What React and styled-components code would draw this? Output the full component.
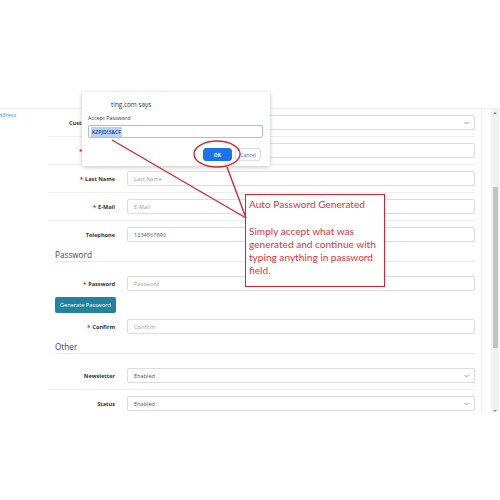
import styled, { createGlobalStyle } from "styled-components";

const Global = createGlobalStyle`
  html, body { margin: 0; padding: 0; background: #fff; }
  * { box-sizing: border-box; }
`;

//whole 500x500 picture
const Screen = styled.div`
  position: relative;
  width: 500px;
  height: 500px;
  overflow: hidden;
  background: #fff;
  font-family: "Open Sans", "Liberation Sans", sans-serif;
  padding-top: 108px;
`;

const Viewport = styled.div`
  display: flex;
  height: 304px;
  border-top: 1px solid #eee;
  overflow: hidden;
`;

const Sidebar = styled.div`
  width: 48px;
  overflow: hidden;
  padding-top: 2px;
`;

const SideLink = styled.div`
  margin-left: -5px;
  font-size: 5.6px;
  color: #3d97d3;
  white-space: nowrap;
`;

const Panel = styled.div`
  width: 434px;
  padding-right: 6px;
  border-right: 1px solid #f2f2f2;
`;

const Row = styled.div`
  display: grid;
  grid-template-columns: 67px 1fr;
  column-gap: 12px;
  align-items: center;
  padding: ${(p) => (p.$top ? `${p.$top}px` : "6px")} 0 6px;
  border-top: ${(p) => (p.$first ? "none" : "1px solid #eee")};
`;

const Label = styled.div`
  text-align: right;
  font-size: 5.6px;
  font-weight: 700;
  color: #333;
  white-space: nowrap;
`;

const Star = styled.span`
  color: #f00;
  margin-right: 2px;
`;

const Field = styled.div`
  position: relative;
  height: 15px;
  border: 1px solid #dcdcdc;
  border-radius: 2px;
  padding-left: 6px;
  display: flex;
  align-items: center;
  font-size: 5.6px;
  color: ${(p) => (p.$filled ? "#555" : "#a0a0a0")};
`;

const Chevron = styled.svg`
  position: absolute;
  right: 5px;
  top: 5px;
`;

const Legend = styled.div`
  margin-left: 7px;
  padding-top: ${(p) => p.$top}px;
  height: ${(p) => p.$top + 13}px;
  font-size: 8.2px;
  line-height: 12px;
  color: #444;
  border-bottom: 1px solid #e8e8e8;
`;

const ButtonRow = styled.div`
  display: flex;
  padding-left: 7px;
`;

const GenButton = styled.div`
  display: flex;
  align-items: center;
  justify-content: center;
  width: 61px;
  height: 16px;
  border-radius: 2px;
  background: #23829f;
  color: #fff;
  font-size: 5.6px;
`;

const Scrollbar = styled.div`
  margin-left: 9px;
  width: 8px;
  background: #f1f1f1;
  display: flex;
  flex-direction: column;
  align-items: center;
  padding-top: 3px;
`;

const Arrow = styled.div`
  width: 0;
  height: 0;
  border-left: 2px solid transparent;
  border-right: 2px solid transparent;
  ${(p) => (p.$down ? "border-top: 2px solid #888;" : "border-bottom: 2px solid #888;")}
`;

const Thumb = styled.div`
  width: 5px;
  height: 161px;
  margin-top: 73px;
  margin-bottom: auto;
  background: #c3c3c3;
`;

//browser prompt lying over the form
const Dialog = styled.div`
  position: absolute;
  left: 82px;
  top: 92px;
  width: 188px;
  height: 74px;
  background: #fff;
  box-shadow: 0 1px 4px rgba(0, 0, 0, 0.25);
  border-radius: 2px;
  padding: 8px 7px 0 6px;
`;

const Origin = styled.div`
  margin-left: 23px;
  font-size: 6.4px;
  color: #333;
`;

const Prompt = styled.div`
  margin-top: 5px;
  font-size: 5.4px;
  color: #333;
`;

const PromptInput = styled.div`
  margin-top: 3px;
  height: 13px;
  border: 1px solid #9ec0f0;
  border-radius: 2px;
  display: flex;
  align-items: center;
  padding-left: 2px;
`;

const Selected = styled.span`
  background: #b8d2f4;
  color: #1f3f7a;
  font-size: 5.2px;
  font-weight: 600;
  padding: 1px 1px;
`;

const Actions = styled.div`
  display: flex;
  justify-content: flex-end;
  gap: 3px;
  margin-top: 10px;
  padding-right: 2px;
`;

const DlgButton = styled.div`
  width: ${(p) => (p.$primary ? 29 : 26)}px;
  height: 13px;
  border-radius: 3px;
  display: flex;
  align-items: center;
  justify-content: center;
  font-size: 5px;
  font-weight: ${(p) => (p.$primary ? 700 : 400)};
  background: ${(p) => (p.$primary ? "#1a73e8" : "#fff")};
  color: ${(p) => (p.$primary ? "#fff" : "#1a73e8")};
  border: 1px solid ${(p) => (p.$primary ? "#1a73e8" : "#dadce0")};
`;

//red annotation note
const Note = styled.div`
  position: absolute;
  left: 245px;
  top: 194px;
  width: 140px;
  height: 93px;
  border: 1.5px solid #d5232d;
  background: #fff;
  padding: 3px 0 0 3px;
  font-family: Lato, "Liberation Sans", sans-serif;
  font-size: 10.1px;
  line-height: 13.3px;
  color: #e3313b;
`;

const NoteGap = styled.div`
  height: 13.3px;
`;

const Marks = styled.svg`
  position: absolute;
  left: 0;
  top: 0;
  pointer-events: none;
`;

function Select({ value }) {
  return (
    <Field $filled>
      {value}
      <Chevron width="5" height="4" viewBox="0 0 5 4">
        <path d="M0.5 1 L2.5 3 L4.5 1" fill="none" stroke="#777" strokeWidth="0.7" />
      </Chevron>
    </Field>
  );
}

function FormRow({ label, required, children, first, top }) {
  return (
    <Row $first={first} $top={top}>
      <Label>
        {required && <Star>*</Star>}
        {label}
      </Label>
      {children}
    </Row>
  );
}

export default function App() {
  return (
    <Screen>
      <Global />
      <Viewport>
        <Sidebar>
          <SideLink>Address</SideLink>
        </Sidebar>
        <Panel>
          <FormRow label="Customer Group" first top={6}>
            <Select value="" />
          </FormRow>
          <FormRow label="First Name" required>
            <Field>First Name</Field>
          </FormRow>
          <FormRow label="Last Name" required>
            <Field>Last Name</Field>
          </FormRow>
          <FormRow label="E-Mail" required>
            <Field>E-Mail</Field>
          </FormRow>
          <FormRow label="Telephone">
            <Field $filled>1234567890</Field>
          </FormRow>
          <Legend $top={1}>Password</Legend>
          <FormRow label="Password" required first top={14}>
            <Field>Password</Field>
          </FormRow>
          <ButtonRow>
            <GenButton>Generate Password</GenButton>
          </ButtonRow>
          <FormRow label="Confirm" required first top={6}>
            <Field>Confirm</Field>
          </FormRow>
          <Legend $top={1}>Other</Legend>
          <FormRow label="Newsletter" first top={14}>
            <Select value="Enabled" />
          </FormRow>
          <FormRow label="Status">
            <Select value="Enabled" />
          </FormRow>
        </Panel>
        <Scrollbar>
          <Arrow />
          <Thumb />
          <Arrow $down />
        </Scrollbar>
      </Viewport>

      <Dialog>
        <Origin>ting.com says</Origin>
        <Prompt>Accept Password</Prompt>
        <PromptInput>
          <Selected>KZPJD!3&amp;CF</Selected>
        </PromptInput>
        <Actions>
          <DlgButton $primary>OK</DlgButton>
          <DlgButton>Cancel</DlgButton>
        </Actions>
      </Dialog>

      <Note>
        Auto Password Generated
        <NoteGap />
        Simply accept what was
        <br />
        generated and continue with
        <br />
        typing anything in password
        <br />
        field.
      </Note>

      <Marks width="500" height="500" viewBox="0 0 500 500">
        <g fill="none" stroke="#d42a33" strokeWidth="1.4">
          <ellipse cx="217" cy="154" rx="23" ry="13" />
          <line x1="112" y1="140" x2="246" y2="218" />
          <line x1="227" y1="167" x2="246" y2="218" />
        </g>
      </Marks>
    </Screen>
  );
}
